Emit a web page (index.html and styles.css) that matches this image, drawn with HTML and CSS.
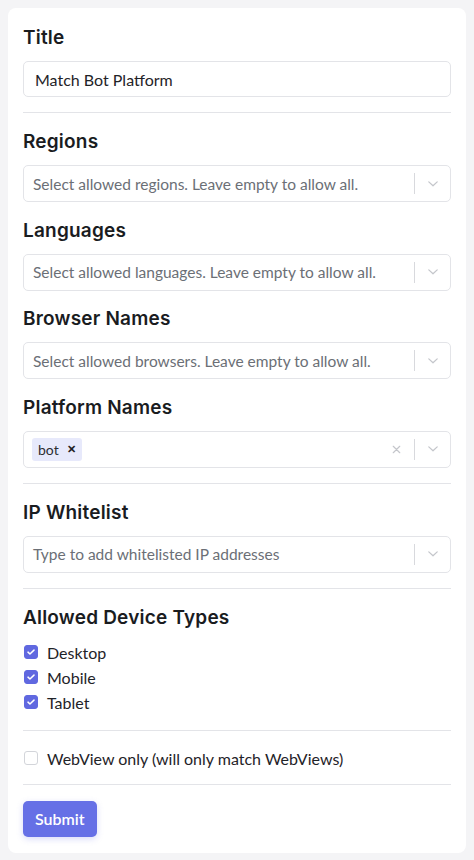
FILE: index.html
```html
<!DOCTYPE html>
<html>
<head>
<meta charset="utf-8">
<link rel="stylesheet" href="styles.css">
</head>
<body>
<form class="card">
  <section class="field">
    <h2 class="label">Title</h2>
    <div class="input">Match Bot Platform</div>
  </section>
  <hr class="divider">
  <section class="field">
    <h2 class="label">Regions</h2>
    <div class="select">
      <div class="value placeholder">Select allowed regions. Leave empty to allow all.</div>
      <div class="indicators"><span class="sep"></span><span class="chev"><svg viewBox="0 0 20 20" width="14" height="14"><path d="M4 7l6 5.5L16 7" fill="none" stroke="currentColor" stroke-width="1.8" stroke-linecap="round" stroke-linejoin="round"/></svg></span></div>
    </div>
  </section>
  <section class="field">
    <h2 class="label">Languages</h2>
    <div class="select">
      <div class="value placeholder">Select allowed languages. Leave empty to allow all.</div>
      <div class="indicators"><span class="sep"></span><span class="chev"><svg viewBox="0 0 20 20" width="14" height="14"><path d="M4 7l6 5.5L16 7" fill="none" stroke="currentColor" stroke-width="1.8" stroke-linecap="round" stroke-linejoin="round"/></svg></span></div>
    </div>
  </section>
  <section class="field">
    <h2 class="label">Browser Names</h2>
    <div class="select">
      <div class="value placeholder">Select allowed browsers. Leave empty to allow all.</div>
      <div class="indicators"><span class="sep"></span><span class="chev"><svg viewBox="0 0 20 20" width="14" height="14"><path d="M4 7l6 5.5L16 7" fill="none" stroke="currentColor" stroke-width="1.8" stroke-linecap="round" stroke-linejoin="round"/></svg></span></div>
    </div>
  </section>
  <section class="field">
    <h2 class="label">Platform Names</h2>
    <div class="select">
      <div class="value tags"><span class="tag">bot<span class="tag-x">✕</span></span></div>
      <div class="indicators"><span class="clear"><svg viewBox="0 0 20 20" width="13" height="13"><path d="M5 5l10 10M15 5L5 15" fill="none" stroke="currentColor" stroke-width="1.8" stroke-linecap="round"/></svg></span><span class="sep"></span><span class="chev"><svg viewBox="0 0 20 20" width="14" height="14"><path d="M4 7l6 5.5L16 7" fill="none" stroke="currentColor" stroke-width="1.8" stroke-linecap="round" stroke-linejoin="round"/></svg></span></div>
    </div>
  </section>
  <hr class="divider">
  <section class="field">
    <h2 class="label">IP Whitelist</h2>
    <div class="select">
      <div class="value placeholder">Type to add whitelisted IP addresses</div>
      <div class="indicators"><span class="sep"></span><span class="chev"><svg viewBox="0 0 20 20" width="14" height="14"><path d="M4 7l6 5.5L16 7" fill="none" stroke="currentColor" stroke-width="1.8" stroke-linecap="round" stroke-linejoin="round"/></svg></span></div>
    </div>
  </section>
  <hr class="divider">
  <section class="field">
    <h2 class="label">Allowed Device Types</h2>
    <div class="checks">
      <label class="check"><span class="box checked"><svg viewBox="0 0 16 16" width="12" height="12"><path d="M4 8.2l2.6 2.5L12 5.5" fill="none" stroke="#fff" stroke-width="2" stroke-linecap="round" stroke-linejoin="round"/></svg></span>Desktop</label>
      <label class="check"><span class="box checked"><svg viewBox="0 0 16 16" width="12" height="12"><path d="M4 8.2l2.6 2.5L12 5.5" fill="none" stroke="#fff" stroke-width="2" stroke-linecap="round" stroke-linejoin="round"/></svg></span>Mobile</label>
      <label class="check"><span class="box checked"><svg viewBox="0 0 16 16" width="12" height="12"><path d="M4 8.2l2.6 2.5L12 5.5" fill="none" stroke="#fff" stroke-width="2" stroke-linecap="round" stroke-linejoin="round"/></svg></span>Tablet</label>
    </div>
  </section>
  <hr class="divider">
  <label class="check single"><span class="box"></span>WebView only (will only match WebViews)</label>
  <hr class="divider">
  <button type="button" class="submit">Submit</button>
</form>
</body>
</html>
```

FILE: styles.css
```css
* { box-sizing: border-box; }
html, body { margin: 0; padding: 0; }
body {
  background: #f4f4f6;
  padding: 8px;
  font-family: Lato, "Liberation Sans", sans-serif;
  color: #1f2328;
}
.card {
  background: #fff;
  border-radius: 8px;
  padding: 18px 15px 16px;
  display: flex;
  flex-direction: column;
}
.field { display: flex; flex-direction: column; }
.field + .field { margin-top: 16.5px; }
.label {
  margin: 0 0 11px;
  font-family: Inter, "Open Sans", sans-serif;
  font-weight: 600;
  font-size: 19px;
  line-height: 24px;
  color: #1a1c1f;
  letter-spacing: 0.2px;
}
.input {
  height: 36px;
  border: 1px solid #e3e4e8;
  border-radius: 5px;
  padding: 0 11px;
  display: flex;
  align-items: center;
  font-size: 16px;
  color: #1f2328;
}
.divider {
  border: 0;
  border-top: 1px solid #e3e4e8;
  margin: 15px 0 17px;
}
.select {
  height: 37px;
  border: 1px solid #e3e4e8;
  border-radius: 5px;
  display: flex;
  align-items: center;
}
.value {
  flex: 1;
  padding: 0 9px;
  font-size: 15.5px;
  white-space: nowrap;
  overflow: hidden;
}
.placeholder { color: #6b6f76; }
.tags { padding: 0 8px; display: flex; }
.tag {
  background: #e7e9fb;
  border-radius: 3px;
  font-size: 14px;
  color: #2b2d31;
  height: 23px;
  display: inline-flex;
  align-items: center;
  padding: 0 6px 0 6px;
  gap: 8px;
}
.tag-x { font-size: 11px; font-weight: 700; color: #222; }
.indicators {
  display: flex;
  align-items: center;
  align-self: stretch;
  color: #c4c6cb;
}
.sep {
  width: 1px;
  align-self: stretch;
  margin: 7px 0;
  background: #d8d9dd;
}
.chev, .clear {
  width: 35px;
  display: flex;
  justify-content: center;
  align-items: center;
}
.clear { width: 36px; }
.checks { display: flex; flex-direction: column; margin-top: -1px; }
.check {
  display: flex;
  align-items: center;
  gap: 9px;
  height: 25px;
  font-size: 16px;
  color: #1f2328;
}
.box {
  width: 14px;
  height: 14px;
  border-radius: 3px;
  border: 1px solid #d3d5da;
  display: inline-flex;
  align-items: center;
  justify-content: center;
  margin-left: 1px;
  background: #fff;
}
.box.checked { background: #6068e0; border-color: #6068e0; }
.single { margin: -2px 0; }
.submit {
  align-self: flex-start;
  margin-top: -1px;
  background: #6670e6;
  color: #fff;
  border: 0;
  border-radius: 5px;
  height: 36px;
  padding: 0 12px;
  font-family: Lato, "Liberation Sans", sans-serif;
  font-size: 16px;
  font-weight: 600;
  box-shadow: 0 2px 6px rgba(102, 112, 230, 0.25);
}
```
